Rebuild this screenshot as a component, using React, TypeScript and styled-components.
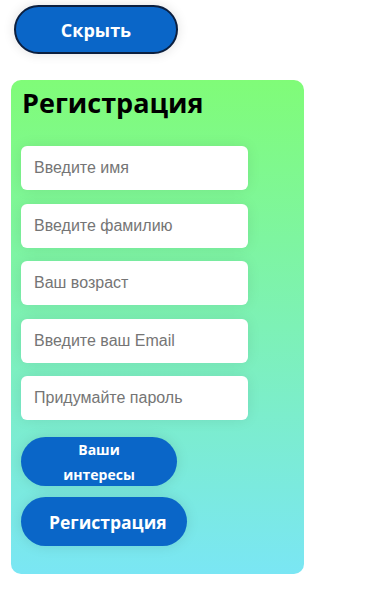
import React, { FC, useState } from "react";
import styled, { createGlobalStyle } from "styled-components";

const GlobalStyle = createGlobalStyle`
  body {
    margin: 0;
    background: #ffffff;
    font-family: "Open Sans", "Noto Sans", sans-serif;
  }
`;

const fields = [
  { type: "text", placeholder: "Введите имя" },
  { type: "text", placeholder: "Введите фамилию" },
  { type: "number", placeholder: "Ваш возраст" },
  { type: "email", placeholder: "Введите ваш Email" },
  { type: "password", placeholder: "Придумайте пароль" },
];

const App: FC = () => {
  const [showForm, setShowForm] = useState(true);

  return (
    <StyledPage>
      <GlobalStyle />
      <StyledToggle onClick={() => setShowForm(!showForm)}>
        {showForm ? "Скрыть" : "Показать"}
      </StyledToggle>

      {showForm ? (
        <StyledCard onSubmit={(event) => event.preventDefault()}>
          <StyledTitle>Регистрация</StyledTitle>
          <StyledFields>
            {fields.map((field) => (
              <StyledInput
                key={field.placeholder}
                type={field.type}
                placeholder={field.placeholder}
              />
            ))}
          </StyledFields>
          <StyledActions>
            <StyledButton type="button" $width={156} $small>
              Ваши интересы
            </StyledButton>
            <StyledButton type="submit" $width={166}>
              Регистрация
            </StyledButton>
          </StyledActions>
        </StyledCard>
      ) : null}
    </StyledPage>
  );
};

const StyledPage = styled.div`
  display: flex;
  flex-direction: column;
  align-items: flex-start;
  padding: 5px 0 0 11px;
`;

const StyledToggle = styled.button`
  margin-left: 3px;
  width: 164px;
  height: 49px;
  border: 2px solid #0b1f3f;
  border-radius: 25px;
  background: #0a66c8;
  color: #ffffff;
  font-family: "Open Sans", "Noto Sans", sans-serif;
  font-size: 18px;
  font-weight: 700;
  box-shadow: 0 0 12px rgba(0, 0, 0, 0.12);
  cursor: pointer;
`;

const StyledCard = styled.form`
  margin-top: 26px;
  width: 293px;
  height: 494px;
  box-sizing: border-box;
  padding: 4px 10px 0 10px;
  border-radius: 10px;
  background: linear-gradient(180deg, #80fc78 0%, #7ae6f4 100%);
  display: flex;
  flex-direction: column;
`;

const StyledTitle = styled.h1`
  margin: 0 0 0 1px;
  font-family: "Open Sans", "Noto Sans", sans-serif;
  font-size: 27px;
  font-weight: 700;
  line-height: 38px;
  color: #000000;
`;

const StyledFields = styled.div`
  margin-top: 24px;
  display: flex;
  flex-direction: column;
  gap: 13.5px;
`;

const StyledInput = styled.input`
  width: 227px;
  height: 44px;
  box-sizing: border-box;
  padding: 0 13px;
  border: none;
  border-radius: 6px;
  background: #ffffff;
  font-family: "Liberation Sans", Arial, sans-serif;
  font-size: 16px;
  color: #222222;
  box-shadow: 0 0 14px rgba(0, 0, 0, 0.08);
  outline: none;

  &::placeholder {
    color: #757575;
  }

  &::-webkit-outer-spin-button,
  &::-webkit-inner-spin-button {
    -webkit-appearance: none;
    margin: 0;
  }
`;

const StyledActions = styled.div`
  margin-top: 17px;
  display: flex;
  flex-direction: column;
  gap: 11px;
`;

const StyledButton = styled.button<{ $width: number; $small?: boolean }>`
  width: ${(p) => p.$width}px;
  height: 49px;
  padding: 0 28px;
  border: none;
  border-radius: 25px;
  background: #0a66c8;
  color: #ffffff;
  font-family: "Open Sans", "Noto Sans", sans-serif;
  font-size: ${(p) => (p.$small ? "14px" : "17.5px")};
  font-weight: 700;
  line-height: ${(p) => (p.$small ? "25px" : "normal")};
  box-shadow: 0 0 14px rgba(0, 0, 0, 0.1);
  cursor: pointer;
`;

export default App;
